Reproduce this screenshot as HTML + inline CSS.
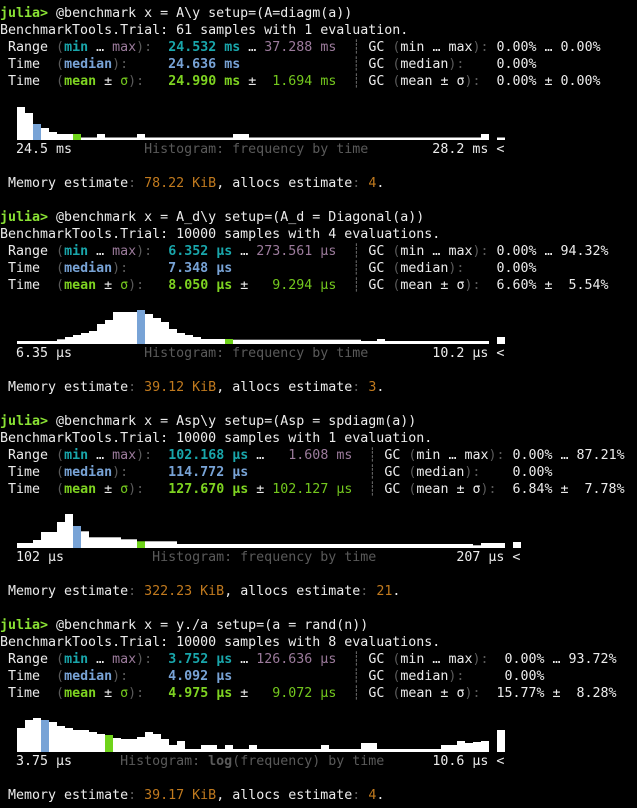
<!DOCTYPE html>
<html><head><meta charset="utf-8"><style>
html,body{margin:0;padding:0;background:#000;width:637px;height:808px;overflow:hidden}
pre{position:absolute;left:0;top:5px;margin:0;font-family:"DejaVu Sans Mono","Liberation Mono",monospace;font-size:13.3px;line-height:17px;color:#ececec;white-space:pre}
.pr{color:#8ae234;font-weight:bold}
.g{color:#5a5a5a}
.s{color:#6a6a6a}
.t{color:#19a6ab;font-weight:bold}
.b{color:#78a3d6;font-weight:bold}
.gr{color:#7ed321;font-weight:bold}
.gn{color:#74c81e}
.p{color:#9c7b9c}
.o{color:#c17a1e}
svg{position:absolute;left:0}
</style></head><body>
<svg width="637" height="150" style="top:0" fill="#fff">
<rect x="17" y="137.5" width="472" height="2.5"/>
<rect x="17" y="107" width="8" height="33"/><rect x="25" y="113" width="8" height="27"/>
<rect x="33" y="124" width="8" height="16" fill="#78a3d6"/><rect x="41" y="128" width="8" height="12"/>
<rect x="49" y="132" width="8" height="8"/><rect x="57" y="134" width="16" height="6"/>
<rect x="73" y="134" width="8" height="6" fill="#6fd31a"/><rect x="97" y="134" width="8" height="6"/>
<rect x="137" y="134" width="8" height="6"/><rect x="233" y="134" width="16" height="6"/>
<rect x="481" y="134" width="8" height="6"/><rect x="497" y="137.5" width="8" height="2.5"/>
</svg>
<svg width="637" height="150" style="top:204px" fill="#fff">
<rect x="17" y="137" width="472" height="3"/>
<rect x="57" y="135.3" width="8" height="4.7"/><rect x="65" y="133" width="8" height="7"/>
<rect x="73" y="131" width="8" height="9"/><rect x="81" y="129" width="8" height="11"/>
<rect x="89" y="127" width="8" height="13"/><rect x="97" y="120" width="8" height="20"/>
<rect x="105" y="116" width="8" height="24"/><rect x="113" y="108" width="24" height="32"/>
<rect x="137" y="106" width="8" height="34" fill="#78a3d6"/><rect x="145" y="110" width="8" height="30"/>
<rect x="153" y="114" width="8" height="26"/><rect x="161" y="118" width="8" height="22"/>
<rect x="169" y="125" width="8" height="15"/><rect x="177" y="129" width="8" height="11"/>
<rect x="185" y="131" width="8" height="9"/><rect x="193" y="133" width="8" height="7"/>
<rect x="201" y="135" width="24" height="5"/><rect x="225" y="135" width="8" height="5" fill="#6fd31a"/>
<rect x="233" y="135.7" width="128" height="4.3"/><rect x="377" y="135" width="8" height="5"/>
<rect x="497" y="133" width="8" height="7"/>
</svg>
<svg width="637" height="150" style="top:408px" fill="#fff">
<rect x="17" y="136" width="488" height="4"/>
<rect x="17" y="135" width="16" height="5"/><rect x="33" y="132" width="8" height="8"/>
<rect x="41" y="124" width="16" height="16"/><rect x="57" y="114" width="8" height="26"/>
<rect x="65" y="106" width="8" height="34"/><rect x="73" y="118" width="8" height="22" fill="#78a3d6"/>
<rect x="81" y="123.3" width="8" height="16.7"/><rect x="89" y="129.3" width="32" height="10.7"/>
<rect x="121" y="131.3" width="16" height="8.7"/><rect x="137" y="133.3" width="8" height="6.7" fill="#6fd31a"/>
<rect x="145" y="133.3" width="32" height="6.7"/><rect x="473" y="136" width="8" height="1.3" fill="#000"/>
<rect x="481" y="135" width="24" height="5"/>
<rect x="513" y="134" width="8" height="6"/>
</svg>
<svg width="637" height="150" style="top:612px" fill="#fff">
<rect x="17" y="137" width="472" height="3"/>
<rect x="17" y="116" width="8" height="24"/><rect x="25" y="108" width="8" height="32"/>
<rect x="33" y="106" width="8" height="34"/><rect x="41" y="108" width="8" height="32" fill="#78a3d6"/>
<rect x="49" y="110" width="8" height="30"/><rect x="57" y="114" width="8" height="26"/>
<rect x="65" y="116" width="8" height="24"/><rect x="73" y="118" width="16" height="22"/>
<rect x="89" y="120" width="8" height="20"/><rect x="97" y="122" width="8" height="18"/>
<rect x="105" y="123" width="8" height="17" fill="#6fd31a"/><rect x="113" y="126" width="8" height="14"/>
<rect x="121" y="127" width="16" height="13"/><rect x="137" y="125" width="8" height="15"/>
<rect x="145" y="120" width="8" height="20"/><rect x="153" y="122" width="8" height="18"/>
<rect x="161" y="127" width="8" height="13"/><rect x="169" y="133" width="8" height="7"/>
<rect x="177" y="129" width="8" height="11"/><rect x="201" y="133" width="16" height="7"/>
<rect x="225" y="133" width="8" height="7"/><rect x="249" y="133" width="8" height="7"/>
<rect x="321" y="133" width="8" height="7"/><rect x="361" y="131" width="16" height="9"/>
<rect x="441" y="133" width="16" height="7"/><rect x="457" y="129" width="8" height="11"/>
<rect x="465" y="131" width="8" height="9"/><rect x="473" y="130" width="8" height="10"/>
<rect x="481" y="129" width="8" height="11"/><rect x="497" y="118" width="8" height="22"/>
</svg>
<pre><span class="pr">julia&gt;</span> @benchmark x = A\y setup=(A=diagm(a))
BenchmarkTools.Trial: 61 samples with 1 evaluation.
 Range <span class="g">(</span><span class="t">min</span> … <span class="p">max</span><span class="g">):</span>  <span class="t">24.532 ms</span> … <span class="p">37.288 ms</span>  <span class="s">┊</span> GC <span class="g">(</span>min … max<span class="g">):</span> 0.00% … 0.00%
 Time  <span class="g">(</span><span class="b">median</span><span class="g">):</span>     <span class="b">24.636 ms</span>              <span class="s">┊</span> GC <span class="g">(</span>median<span class="g">):</span>    0.00%
 Time  <span class="g">(</span><span class="gr">mean</span> ± <span class="gn">σ</span><span class="g">):</span>   <span class="gr">24.990 ms</span> ± <span class="gn"> 1.694 ms</span>  <span class="s">┊</span> GC <span class="g">(</span>mean ± σ<span class="g">):</span>  0.00% ± 0.00%



  24.5 ms         <span class="g">Histogram: frequency by time</span>        28.2 ms &lt;

 Memory estimate<span class="g">:</span> <span class="o">78.22 KiB</span>, allocs estimate<span class="g">:</span> <span class="o">4</span>.

<span class="pr">julia&gt;</span> @benchmark x = A_d\y setup=(A_d = Diagonal(a))
BenchmarkTools.Trial: 10000 samples with 4 evaluations.
 Range <span class="g">(</span><span class="t">min</span> … <span class="p">max</span><span class="g">):</span>  <span class="t">6.352 μs</span> … <span class="p">273.561 μs</span>  <span class="s">┊</span> GC <span class="g">(</span>min … max<span class="g">):</span> 0.00% … 94.32%
 Time  <span class="g">(</span><span class="b">median</span><span class="g">):</span>     <span class="b">7.348 μs</span>               <span class="s">┊</span> GC <span class="g">(</span>median<span class="g">):</span>    0.00%
 Time  <span class="g">(</span><span class="gr">mean</span> ± <span class="gn">σ</span><span class="g">):</span>   <span class="gr">8.050 μs</span> ± <span class="gn">  9.294 μs</span>  <span class="s">┊</span> GC <span class="g">(</span>mean ± σ<span class="g">):</span>  6.60% ±  5.54%



  6.35 μs         <span class="g">Histogram: frequency by time</span>        10.2 μs &lt;

 Memory estimate<span class="g">:</span> <span class="o">39.12 KiB</span>, allocs estimate<span class="g">:</span> <span class="o">3</span>.

<span class="pr">julia&gt;</span> @benchmark x = Asp\y setup=(Asp = spdiagm(a))
BenchmarkTools.Trial: 10000 samples with 1 evaluation.
 Range <span class="g">(</span><span class="t">min</span> … <span class="p">max</span><span class="g">):</span>  <span class="t">102.168 μs</span> … <span class="p">  1.608 ms</span>  <span class="s">┊</span> GC <span class="g">(</span>min … max<span class="g">):</span> 0.00% … 87.21%
 Time  <span class="g">(</span><span class="b">median</span><span class="g">):</span>     <span class="b">114.772 μs</span>               <span class="s">┊</span> GC <span class="g">(</span>median<span class="g">):</span>    0.00%
 Time  <span class="g">(</span><span class="gr">mean</span> ± <span class="gn">σ</span><span class="g">):</span>   <span class="gr">127.670 μs</span> ± <span class="gn">102.127 μs</span>  <span class="s">┊</span> GC <span class="g">(</span>mean ± σ<span class="g">):</span>  6.84% ±  7.78%



  102 μs           <span class="g">Histogram: frequency by time</span>          207 μs &lt;

 Memory estimate<span class="g">:</span> <span class="o">322.23 KiB</span>, allocs estimate<span class="g">:</span> <span class="o">21</span>.

<span class="pr">julia&gt;</span> @benchmark x = y./a setup=(a = rand(n))
BenchmarkTools.Trial: 10000 samples with 8 evaluations.
 Range <span class="g">(</span><span class="t">min</span> … <span class="p">max</span><span class="g">):</span>  <span class="t">3.752 μs</span> … <span class="p">126.636 μs</span>  <span class="s">┊</span> GC <span class="g">(</span>min … max<span class="g">):</span>  0.00% … 93.72%
 Time  <span class="g">(</span><span class="b">median</span><span class="g">):</span>     <span class="b">4.092 μs</span>               <span class="s">┊</span> GC <span class="g">(</span>median<span class="g">):</span>     0.00%
 Time  <span class="g">(</span><span class="gr">mean</span> ± <span class="gn">σ</span><span class="g">):</span>   <span class="gr">4.975 μs</span> ± <span class="gn">  9.072 μs</span>  <span class="s">┊</span> GC <span class="g">(</span>mean ± σ<span class="g">):</span>  15.77% ±  8.28%



  3.75 μs      <span class="g">Histogram: <b>log</b>(frequency) by time</span>      10.6 μs &lt;

 Memory estimate<span class="g">:</span> <span class="o">39.17 KiB</span>, allocs estimate<span class="g">:</span> <span class="o">4</span>.
</pre>
</body></html>
